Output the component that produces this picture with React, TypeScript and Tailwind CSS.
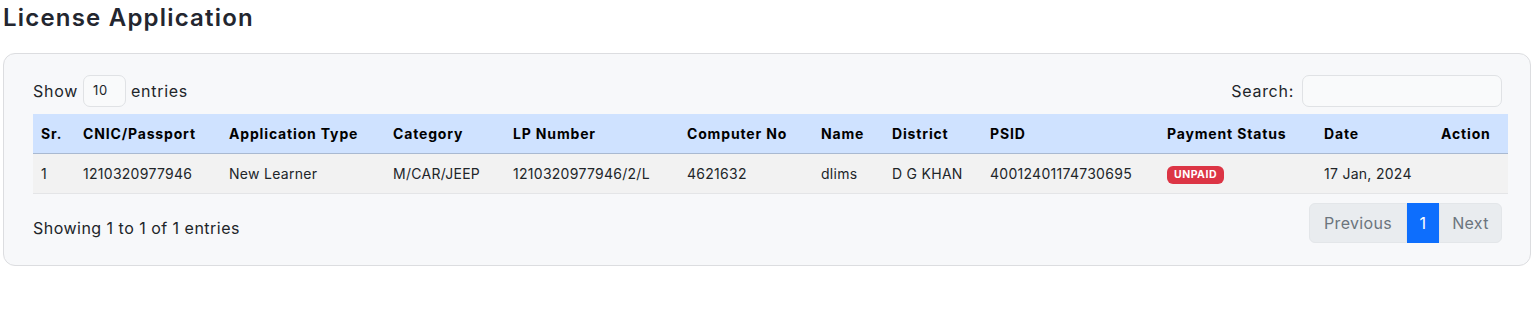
import React from "react";

const cols = [42, 146, 164, 120, 174, 134, 71, 98, 177, 157, 117, 75];
const heads = [
  "Sr.",
  "CNIC/Passport",
  "Application Type",
  "Category",
  "LP Number",
  "Computer No",
  "Name",
  "District",
  "PSID",
  "Payment Status",
  "Date",
  "Action",
];

export default function App() {
  return (
    <div
      className="w-[1536px] h-[312px] bg-white text-[#212529]"
      style={{ fontFamily: "Inter, 'Open Sans', sans-serif" }}
    >
      <h4 className="pl-[3px] pt-[3px] text-[24px] leading-[29px] font-semibold text-[#23262f] tracking-[0.05em]">
        License Application
      </h4>
      <div className="ml-[3px] mr-[5px] mt-[21px] rounded-[12px] border border-[#dcdde0] bg-[#f7f8fa] pl-[29px] pr-[28px] pt-[21px] pb-[22px]">
        <div className="flex items-center justify-between h-[32px]">
          <div className="flex items-center text-[16px] tracking-[0.045em]">
            <span>Show</span>
            <div className="ml-[5px] mr-[5px] w-[43px] h-[32px] rounded-[7px] border border-[#e0e2e5] bg-[#f9fafb] flex items-center pl-[9px] text-[13px]">
              10
            </div>
            <span>entries</span>
          </div>
          <div className="flex items-center text-[16px] tracking-[0.045em]">
            <span>Search:</span>
            <div className="ml-[8px] w-[200px] h-[32px] rounded-[7px] border border-[#e0e2e5] bg-[#f9fafb]" />
          </div>
        </div>
        <div className="mt-[7px] mr-[-6px]">
          <table className="w-[1475px] table-fixed border-collapse text-[14px] tracking-[0.02em]">
            <colgroup>
              {cols.map((w, i) => (
                <col key={i} style={{ width: w }} />
              ))}
            </colgroup>
            <thead>
              <tr className="bg-[#cfe2ff] h-[39px] border-b border-[#a9b9d1]">
                {heads.map((h) => (
                  <th key={h} className="text-left font-bold px-[8px] text-black whitespace-nowrap tracking-[0.06em]">
                    {h}
                  </th>
                ))}
              </tr>
            </thead>
            <tbody>
              <tr className="bg-[#f2f2f2] h-[40px] border-b border-[#e4e5e7]">
                <td className="px-[8px]">1</td>
                <td className="px-[8px]">1210320977946</td>
                <td className="px-[8px]">New Learner</td>
                <td className="px-[8px]">M/CAR/JEEP</td>
                <td className="px-[8px]">1210320977946/2/L</td>
                <td className="px-[8px]">4621632</td>
                <td className="px-[8px]">dlims</td>
                <td className="px-[8px]">D G KHAN</td>
                <td className="px-[8px]">40012401174730695</td>
                <td className="px-[8px]">
                  <span className="inline-flex items-center justify-center w-[57px] h-[18px] rounded-[6px] bg-[#dc3545] text-white text-[10.5px] font-bold tracking-[0.05em]">
                    UNPAID
                  </span>
                </td>
                <td className="px-[8px]">17 Jan, 2024</td>
                <td className="px-[8px]"></td>
              </tr>
            </tbody>
          </table>
        </div>
        <div className="mt-[9px] flex items-start justify-between">
          <div className="pt-[15px] text-[16px] leading-[20px] tracking-[0.03em]">
            Showing 1 to 1 of 1 entries
          </div>
          <div className="flex h-[40px] text-[16px] tracking-[0.02em]">
            <div className="w-[98px] flex items-center justify-center rounded-l-[6px] border border-[#e3e6e9] bg-[#e9ecef] text-[#6c757d]">
              Previous
            </div>
            <div className="w-[32px] flex items-center justify-center bg-[#0d6efd] text-white">
              1
            </div>
            <div className="w-[63px] flex items-center justify-center rounded-r-[6px] border border-[#e3e6e9] bg-[#e9ecef] text-[#6c757d]">
              Next
            </div>
          </div>
        </div>
      </div>
    </div>
  );
}
